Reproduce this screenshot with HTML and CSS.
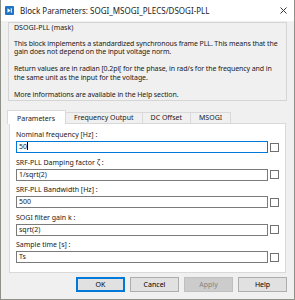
FILE: index.html
```html
<!DOCTYPE html>
<html lang="en">
<head>
    <meta charset="UTF-8">
    <title>Block Parameters: SOGI_MSOGI_PLECS/DSOGI-PLL</title>
    <link rel="stylesheet" href="styles.css">
</head>
<body>
    <div class="window">
        <div class="titlebar">
            <svg class="app-icon" width="9" height="9" viewBox="0 0 9 9">
                <rect x="0" y="0" width="9" height="9" rx="1" fill="#1f74c4"/>
                <path d="M2.5 2.2 L5.6 4.5 L2.5 6.8 Z" fill="#fff"/>
                <rect x="5.8" y="2.2" width="1" height="4.6" fill="#fff"/>
            </svg>
            <span class="title">Block Parameters: SOGI_MSOGI_PLECS/DSOGI-PLL</span>
            <svg class="close" width="7" height="7" viewBox="0 0 7 7">
                <path d="M0.5 0.5 L6.5 6.5 M6.5 0.5 L0.5 6.5" stroke="#333" stroke-width="1"/>
            </svg>
        </div>

        <div class="content">
            <div class="mask-box">
                <div class="mask-title">DSOGI-PLL (mask)</div>
                <p>This block implements a standardized synchronous frame PLL. This means that the gain does not depend on the input voltage norm.</p>
                <p>Return values are in radian [0.2pi[ for the phase, in rad/s for the frequency and in the same unit as the input for the voltage.</p>
                <p>More informations are available in the Help section.</p>
            </div>

            <div class="tabs">
                <div class="tab active">Parameters</div>
                <div class="tab">Frequency Output</div>
                <div class="tab">DC Offset</div>
                <div class="tab">MSOGI</div>
            </div>
            <div class="panel">
                <div class="field">
                    <label>Nominal frequency [Hz] :</label>
                    <div class="field-row">
                        <div class="input focused">50<span class="caret"></span></div>
                        <span class="check"></span>
                    </div>
                </div>
                <div class="field">
                    <label>SRF-PLL Damping factor ζ :</label>
                    <div class="field-row">
                        <div class="input">1/sqrt(2)</div>
                        <span class="check"></span>
                    </div>
                </div>
                <div class="field">
                    <label>SRF-PLL Bandwidth [Hz] :</label>
                    <div class="field-row">
                        <div class="input">500</div>
                        <span class="check"></span>
                    </div>
                </div>
                <div class="field">
                    <label>SOGI filter gain k :</label>
                    <div class="field-row">
                        <div class="input">sqrt(2)</div>
                        <span class="check"></span>
                    </div>
                </div>
                <div class="field">
                    <label>Sample time [s] :</label>
                    <div class="field-row">
                        <div class="input">Ts</div>
                        <span class="check"></span>
                    </div>
                </div>
            </div>

            <div class="buttons">
                <button class="btn default">OK</button>
                <button class="btn">Cancel</button>
                <button class="btn disabled">Apply</button>
                <button class="btn">Help</button>
            </div>
        </div>
    </div>
</body>
</html>
```

FILE: styles.css
```css
body {
    margin: 0;
    font-family: "Noto Sans", "Liberation Sans", sans-serif;
    font-size: 7px;
    color: #1a1a1a;
}
.window {
    width: 295px;
    height: 300px;
    box-sizing: border-box;
    background-color: #f0f0f0;
    border: 1px solid #8d9188;
    border-top: none;
    overflow: hidden;
}
.titlebar {
    height: 21px;
    background-color: #fff;
    display: flex;
    align-items: center;
    padding-left: 4px;
}
.app-icon {
    flex: none;
}
.title {
    margin-left: 6px;
    font-size: 8px;
    color: #222;
    flex: 1;
}
.close {
    margin-right: 7px;
}
.content {
    padding: 0 7px 0 7px;
}

/* mask description */
.mask-box {
    margin-top: 1px;
    border: 1px solid #d5d5d5;
    padding: 1px 5px 1px 5px;
    line-height: 8.5px;
}
.mask-title {
    margin-bottom: 7px;
}
.mask-box p {
    margin: 0 0 8.5px 0;
    letter-spacing: -0.1px;
}
.mask-box p:last-child {
    margin-bottom: 0;
}

/* tabs */
.tabs {
    display: flex;
    align-items: flex-end;
    margin-top: 9px;
    padding-left: 1px;
}
.tab {
    height: 10px;
    line-height: 10px;
    padding: 0 8px;
    border: 1px solid #d9d9d9;
    border-bottom: none;
    border-left: none;
    background-color: #f0f0f0;
    text-align: center;
}
.tab.active {
    height: 13px;
    line-height: 15px;
    background-color: #fff;
    border-left: 1px solid #d9d9d9;
    margin-left: -2px;
    margin-bottom: -1px;
    position: relative;
    padding: 0 10px 0 9px;
}
.panel {
    background-color: #fff;
    border: 1px solid #d9d9d9;
    margin: 0 1px 0 1px;
    padding: 7px 6px 9px 6px;
    display: flex;
    flex-direction: column;
    gap: 5.5px;
}
.field label {
    display: block;
    line-height: 8px;
    margin-bottom: 2px;
}
.field-row {
    display: flex;
    align-items: center;
    gap: 2px;
}
.input {
    width: 253px;
    height: 12px;
    box-sizing: border-box;
    border: 1px solid #7a7a7a;
    line-height: 10px;
    padding-left: 2px;
}
.input.focused {
    border-color: #0078d7;
}
.caret {
    display: inline-block;
    width: 1px;
    height: 8px;
    background-color: #000;
    vertical-align: -1px;
}
.check {
    width: 9px;
    height: 9px;
    box-sizing: border-box;
    border: 1px solid #707070;
    background-color: #fff;
}

/* buttons */
.buttons {
    display: flex;
    justify-content: flex-end;
    gap: 5px;
    margin-top: 4px;
}
.btn {
    width: 49px;
    height: 15px;
    padding: 0;
    font-family: inherit;
    font-size: 7px;
    background-color: #e1e1e1;
    border: 1px solid #adadad;
    color: #000;
}
.btn.default {
    border: 1px solid #0078d7;
    box-shadow: inset 0 0 0 1px #0078d7;
}
.btn.disabled {
    background-color: #cccccc;
    border-color: #bfbfbf;
    color: #838383;
}
```
